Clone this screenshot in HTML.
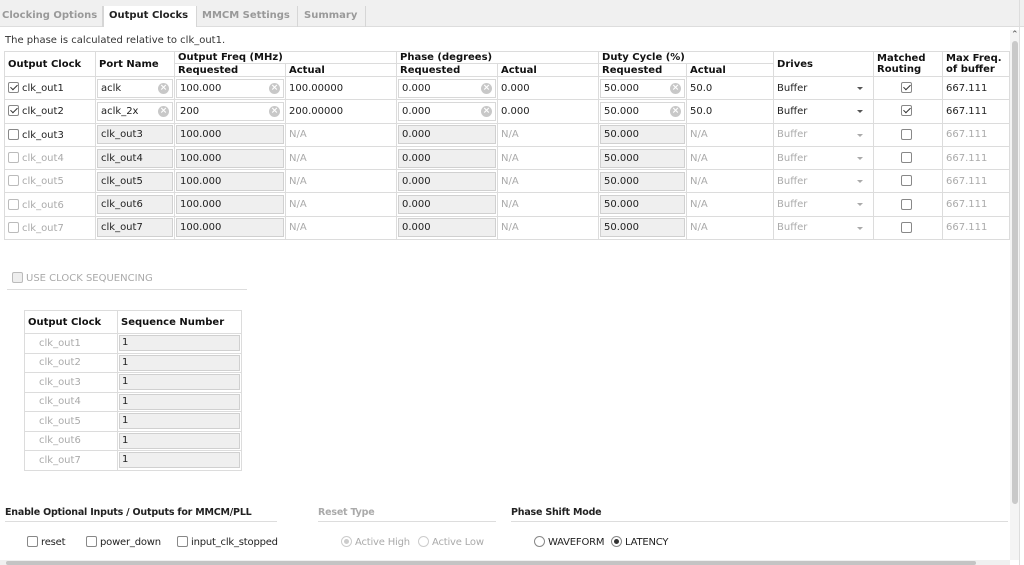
<!DOCTYPE html>
<html><head><meta charset="utf-8"><style>
*{box-sizing:border-box;margin:0;padding:0}
body{width:1024px;height:565px;overflow:hidden;background:#fff;font-family:"DejaVu Sans","Liberation Sans",sans-serif;font-size:10px;color:#222;position:relative}
.top{position:absolute;left:0;top:0;width:1024px;height:27px;background:#f0f0f0;border-bottom:1px solid #ddd}
.tab{position:absolute;top:6px;height:21px;font-size:10px;font-weight:bold;color:#999;line-height:20px;padding-left:1px;border-right:1px solid #d6d6d6;white-space:nowrap}
.tab.on{background:#fff;color:#222;border-left:1px solid #d6d6d6}
.rb{position:absolute;right:4px;top:0;width:1px;height:565px;background:#ddd}
.vs{position:absolute;left:1010px;top:30px;width:10px;height:530px;background:#f4f4f4}
.vt{position:absolute;left:1012px;top:41px;width:6px;height:463px;background:#c9c9c9;border-radius:3px}
.hs{position:absolute;left:0;top:560px;width:1010px;height:5px;background:#f0f0f0}
.ht{position:absolute;left:6px;top:561px;width:970px;height:4px;background:#c4c4c4;border-radius:2px}
.msg{position:absolute;left:5px;top:35px;font-size:10px;color:#333}
table{border-collapse:collapse;position:absolute;table-layout:fixed}
td,th{border:1px solid #dcdcdc;padding:0 3px;white-space:nowrap;overflow:hidden}
th{font-weight:bold;text-align:left;font-size:10px;color:#111}
#m{left:4px;top:51px;width:1005px}
#m tr.d td{height:23.3px}
.in{display:block;height:19px;border:1px solid #d8d8d8;background:#fff;line-height:17px;padding-left:3px;position:relative;margin:0 -2px}
.in.g{background:#efefef;border-color:#d0d0d0}
.x{position:absolute;right:3px;top:3px;width:11px;height:11px;border-radius:50%;background:#c8c8c8;color:#fff;font-size:9px;line-height:11px;text-align:center;font-weight:bold}
.cb{display:inline-block;width:11px;height:11px;border:1px solid #888;border-radius:2px;vertical-align:-2px;margin-right:3px;position:relative;background:#fff}
.cb.dis{border-color:#bbb}
.cb.k::after{content:"";position:absolute;left:3px;top:0px;width:3px;height:6px;border:solid #333;border-width:0 1.5px 1.5px 0;transform:rotate(45deg)}
.gr{color:#aaa}
.dd{position:relative}
.dd::after{content:"";position:absolute;right:10px;top:10px;border:3px solid transparent;border-top:3px solid #555}
.dd.gr::after{border-top-color:#aaa}
#s{left:24px;top:310px;width:217px}
#s th{height:23px}
#s td{height:19.5px}
.sq{display:block;background:#efefef;border:1px solid #d0d0d0;height:16px;line-height:14px;padding-left:2px;margin:0 -2px}
.sec{position:absolute;font-weight:bold;font-size:9.5px;white-space:nowrap;letter-spacing:-0.2px}
.line{position:absolute;top:521px;height:1px;background:#ddd}
.rd{display:inline-block;width:11px;height:11px;border:1px solid #888;border-radius:50%;vertical-align:-2px;margin-right:3px;position:relative;background:#fff}
.rd.f::after{content:"";position:absolute;left:2px;top:2px;width:5px;height:5px;border-radius:50%;background:#333}
.rd.dis{border-color:#ccc}.rd.dis.f::after{background:#ccc}
.lb{position:absolute;top:536px;font-size:10px;white-space:nowrap;letter-spacing:-0.2px}
</style></head><body>
<div class="top"></div>
<div class="tab" style="left:0;width:103px;padding-left:2px">Clocking Options</div>
<div class="tab on" style="left:103px;width:94px;padding-left:5px">Output Clocks</div>
<div class="tab" style="left:197px;width:101px;padding-left:5px">MMCM Settings</div>
<div class="tab" style="left:298px;width:68px;padding-left:6px">Summary</div>
<div class="msg">The phase is calculated relative to clk_out1.</div>
<table id="m">
<colgroup><col style="width:91px"><col style="width:79px"><col style="width:111px"><col style="width:111px"><col style="width:101px"><col style="width:101px"><col style="width:88px"><col style="width:87px"><col style="width:100px"><col style="width:69px"><col style="width:67px"></colgroup>
<tr><th rowspan="2">Output Clock</th><th rowspan="2">Port Name</th><th colspan="2" style="height:12px;line-height:11px">Output Freq (MHz)</th><th colspan="2">Phase (degrees)</th><th colspan="2">Duty Cycle (%)</th><th rowspan="2">Drives</th><th rowspan="2" style="line-height:11px">Matched<br>Routing</th><th rowspan="2" style="line-height:11px">Max Freq.<br>of buffer</th></tr>
<tr><th style="height:13px;line-height:11px">Requested</th><th>Actual</th><th>Requested</th><th>Actual</th><th>Requested</th><th>Actual</th></tr>
<tr class="d"><td><span class="cb k"></span>clk_out1</td><td><span class="in">aclk<span class="x">×</span></span></td><td><span class="in">100.000<span class="x">×</span></span></td><td>100.00000</td><td><span class="in">0.000<span class="x">×</span></span></td><td>0.000</td><td><span class="in">50.000<span class="x">×</span></span></td><td>50.0</td><td class="dd">Buffer</td><td style="text-align:center"><span class="cb k"></span></td><td>667.111</td></tr>
<tr class="d"><td><span class="cb k"></span>clk_out2</td><td><span class="in">aclk_2x<span class="x">×</span></span></td><td><span class="in">200<span class="x">×</span></span></td><td>200.00000</td><td><span class="in">0.000<span class="x">×</span></span></td><td>0.000</td><td><span class="in">50.000<span class="x">×</span></span></td><td>50.0</td><td class="dd">Buffer</td><td style="text-align:center"><span class="cb k"></span></td><td>667.111</td></tr>
<tr class="d"><td><span class="cb"></span>clk_out3</td><td><span class="in g">clk_out3</span></td><td><span class="in g">100.000</span></td><td class="gr">N/A</td><td><span class="in g">0.000</span></td><td class="gr">N/A</td><td><span class="in g">50.000</span></td><td class="gr">N/A</td><td class="dd gr">Buffer</td><td style="text-align:center"><span class="cb"></span></td><td class="gr">667.111</td></tr>
<tr class="d"><td class="gr"><span class="cb dis"></span>clk_out4</td><td><span class="in g">clk_out4</span></td><td><span class="in g">100.000</span></td><td class="gr">N/A</td><td><span class="in g">0.000</span></td><td class="gr">N/A</td><td><span class="in g">50.000</span></td><td class="gr">N/A</td><td class="dd gr">Buffer</td><td style="text-align:center"><span class="cb"></span></td><td class="gr">667.111</td></tr>
<tr class="d"><td class="gr"><span class="cb dis"></span>clk_out5</td><td><span class="in g">clk_out5</span></td><td><span class="in g">100.000</span></td><td class="gr">N/A</td><td><span class="in g">0.000</span></td><td class="gr">N/A</td><td><span class="in g">50.000</span></td><td class="gr">N/A</td><td class="dd gr">Buffer</td><td style="text-align:center"><span class="cb"></span></td><td class="gr">667.111</td></tr>
<tr class="d"><td class="gr"><span class="cb dis"></span>clk_out6</td><td><span class="in g">clk_out6</span></td><td><span class="in g">100.000</span></td><td class="gr">N/A</td><td><span class="in g">0.000</span></td><td class="gr">N/A</td><td><span class="in g">50.000</span></td><td class="gr">N/A</td><td class="dd gr">Buffer</td><td style="text-align:center"><span class="cb"></span></td><td class="gr">667.111</td></tr>
<tr class="d"><td class="gr"><span class="cb dis"></span>clk_out7</td><td><span class="in g">clk_out7</span></td><td><span class="in g">100.000</span></td><td class="gr">N/A</td><td><span class="in g">0.000</span></td><td class="gr">N/A</td><td><span class="in g">50.000</span></td><td class="gr">N/A</td><td class="dd gr">Buffer</td><td style="text-align:center"><span class="cb"></span></td><td class="gr">667.111</td></tr>
</table>
<div style="position:absolute;left:12px;top:272px;color:#aaa"><span class="cb dis" style="background:#eee"></span>USE CLOCK SEQUENCING</div>
<div style="position:absolute;left:7px;top:289px;width:240px;height:1px;background:#ddd"></div>
<table id="s"><colgroup><col style="width:93px"><col style="width:124px"></colgroup>
<tr><th>Output Clock</th><th>Sequence Number</th></tr>
<tr><td class="gr" style="padding-left:14px">clk_out1</td><td><span class="sq">1</span></td></tr>
<tr><td class="gr" style="padding-left:14px">clk_out2</td><td><span class="sq">1</span></td></tr>
<tr><td class="gr" style="padding-left:14px">clk_out3</td><td><span class="sq">1</span></td></tr>
<tr><td class="gr" style="padding-left:14px">clk_out4</td><td><span class="sq">1</span></td></tr>
<tr><td class="gr" style="padding-left:14px">clk_out5</td><td><span class="sq">1</span></td></tr>
<tr><td class="gr" style="padding-left:14px">clk_out6</td><td><span class="sq">1</span></td></tr>
<tr><td class="gr" style="padding-left:14px">clk_out7</td><td><span class="sq">1</span></td></tr>
</table>
<div class="sec" style="left:5px;top:507px">Enable Optional Inputs / Outputs for MMCM/PLL</div>
<div class="sec" style="left:318px;top:507px;color:#aaa">Reset Type</div>
<div class="sec" style="left:511px;top:507px">Phase Shift Mode</div>
<div class="line" style="left:5px;width:272px"></div>
<div class="line" style="left:318px;width:178px"></div>
<div class="line" style="left:511px;width:497px"></div>
<div class="lb" style="left:27px"><span class="cb"></span>reset</div>
<div class="lb" style="left:86px"><span class="cb"></span>power_down</div>
<div class="lb" style="left:177px"><span class="cb"></span>input_clk_stopped</div>
<div class="lb gr" style="left:341px"><span class="rd dis f"></span>Active High</div>
<div class="lb gr" style="left:418px"><span class="rd dis"></span>Active Low</div>
<div class="lb" style="left:534px"><span class="rd"></span>WAVEFORM</div>
<div class="lb" style="left:611px"><span class="rd f"></span>LATENCY</div>
<div class="vs"></div><div class="vt"></div>
<div style="position:absolute;left:1011px;top:30px;font-size:9px;color:#555">⌃</div>
<div class="hs"></div><div class="ht"></div>
<div class="rb"></div>
</body></html>
